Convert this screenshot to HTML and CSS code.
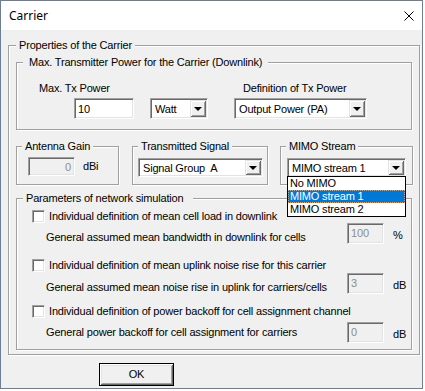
FILE: index.html
```html
<!DOCTYPE html>
<html>
<head>
<meta charset="utf-8">
<title>Carrier</title>
<link rel="stylesheet" href="styles.css">
</head>
<body>
<div class="window">
  <div class="titlebar">
    <span class="title">Carrier</span>
    <svg class="close" width="10" height="10" viewBox="0 0 10 10"><path d="M0.5 0.5 L9.5 9.5 M9.5 0.5 L0.5 9.5" stroke="#000" stroke-width="1" fill="none"/></svg>
  </div>
  <div class="client">
    <div class="group g-outer">
      <div class="gtitle t-outer">Properties of the Carrier</div>

      <div class="group g-power">
        <div class="gtitle t-power">Max. Transmitter Power for the Carrier (Downlink)</div>
        <div class="power-labels">
          <span class="lbl-maxtx">Max. Tx Power</span>
          <span class="lbl-def">Definition of Tx Power</span>
        </div>
        <div class="power-controls">
          <div class="edit e-power">10</div>
          <div class="combo c-watt"><span class="combo-text">Watt</span><span class="drop"><span class="tri"></span></span></div>
          <div class="combo c-def"><span class="combo-text">Output Power (PA)</span><span class="drop"><span class="tri"></span></span></div>
        </div>
      </div>

      <div class="row3">
        <div class="group g-ant">
          <div class="gtitle t-small">Antenna Gain</div>
          <div class="ant-row">
            <div class="edit disabled e-ant">0</div>
            <span class="unit-dbi">dBi</span>
          </div>
        </div>
        <div class="group g-sig">
          <div class="gtitle t-small">Transmitted Signal</div>
          <div class="combo c-sig"><span class="combo-text">Signal Group&nbsp; A</span><span class="drop"><span class="tri"></span></span></div>
        </div>
        <div class="group g-mimo">
          <div class="gtitle t-small">MIMO Stream</div>
          <div class="combo c-mimo"><span class="combo-text">MIMO stream 1</span><span class="drop"><span class="tri"></span></span>
            <ul class="droplist">
              <li>No MIMO</li>
              <li class="sel">MIMO stream 1</li>
              <li>MIMO stream 2</li>
            </ul>
          </div>
        </div>
      </div>

      <div class="group g-params">
        <div class="gtitle t-params">Parameters of network simulation</div>
        <div class="chk-row r-a"><span class="chk"></span><span>Individual definition of mean cell load in downlink</span></div>
        <div class="val-row r-b"><span class="val-label">General assumed mean bandwidth in downlink for cells</span><div class="edit disabled e-val">100</div><span class="val-unit">%</span></div>
        <div class="chk-row r-c"><span class="chk"></span><span>Individual definition of mean uplink noise rise for this carrier</span></div>
        <div class="val-row r-d"><span class="val-label">General assumed mean noise rise in uplink for carriers/cells</span><div class="edit disabled e-val">3</div><span class="val-unit">dB</span></div>
        <div class="chk-row r-e"><span class="chk"></span><span>Individual definition of power backoff for cell assignment channel</span></div>
        <div class="val-row r-f"><span class="val-label">General power backoff for cell assignment for carriers</span><div class="edit disabled e-val">0</div><span class="val-unit">dB</span></div>
      </div>
    </div>
    <div class="buttons">
      <div class="btn">OK</div>
    </div>
  </div>
</div>
</body>
</html>
```

FILE: styles.css
```css
* { box-sizing: border-box; }
html, body { margin: 0; padding: 0; }
body {
  background: #ffffff;
  font-family: "Liberation Sans", Arial, sans-serif;
  font-size: 11px;
  line-height: 13px;
  letter-spacing: -0.18px;
  color: #000;
}
.window {
  width: 423px;
  height: 389px;
  border: 1px solid #6e7d96;
  display: flex;
  flex-direction: column;
  background: #f0f0f0;
}
.titlebar {
  height: 29px;
  flex: none;
  background: #fff;
  display: flex;
  align-items: center;
  padding-left: 8px;
}
.title {
  font-family: "Noto Sans", "Open Sans", sans-serif;
  font-size: 12px;
  line-height: 16px;
  letter-spacing: 0;
}
.close { margin-left: auto; margin-right: 8px; display: block; }

.client {
  flex: 1;
  display: flex;
  flex-direction: column;
  padding: 15px 2px 0 7px;
}

.group {
  border: 1px solid #a0a0a0;
  box-shadow: inset 1px 1px 0 #fff, 1px 1px 0 #fff;
}
.gtitle {
  width: max-content;
  height: 13px;
  margin-top: -7px;
  padding: 0 3px;
  background: #f0f0f0;
}
.t-outer { margin-left: 7px; }
.t-power { margin-left: 6px; padding: 0 6px 0 6px; }
.t-small { margin-left: 5px; }
.t-params { margin-left: 6px; padding-right: 10px; }

.g-outer { width: 412px; height: 310px; }
.g-power { margin: 10px 7px 0 7px; padding-bottom: 10px; }
.power-labels { display: flex; margin-top: 13px; padding-left: 22px; }
.lbl-maxtx { width: 204px; }
.power-controls { display: flex; margin-top: 3px; padding-left: 57px; }

.edit {
  height: 21px;
  background: #fff;
  border: 1px solid;
  border-color: #a0a0a0 #fff #fff #a0a0a0;
  box-shadow: inset 1px 1px 0 #696969, inset -1px -1px 0 #e3e3e3;
  padding: 4px 3px 0 3px;
  white-space: nowrap;
}
.edit.disabled { background: #f0f0f0; color: #8d8d8d; }
.e-power { width: 60px; }

.combo {
  position: relative;
  display: flex;
  height: 21px;
  background: #fff;
  border: 1px solid;
  border-color: #a0a0a0 #fff #fff #a0a0a0;
  box-shadow: inset 1px 1px 0 #696969, inset -1px -1px 0 #e3e3e3;
  padding: 1px;
}
.combo-text { flex: 1; padding: 3px 0 0 3px; white-space: nowrap; }
.drop {
  width: 16px;
  flex: none;
  background: #f0f0f0;
  box-shadow: inset 1px 1px 0 #e3e3e3, inset -1px -1px 0 #696969, inset 2px 2px 0 #fff, inset -2px -2px 0 #a0a0a0;
  display: flex;
  align-items: center;
  justify-content: center;
}
.tri {
  width: 0; height: 0;
  border-left: 4px solid transparent;
  border-right: 4px solid transparent;
  border-top: 4px solid #000;
  margin-top: 1px;
}
.c-watt { width: 58px; margin-left: 16px; }
.c-def { width: 133px; margin-left: 26px; }

.row3 { display: flex; margin: 16px 0 0 7px; }
.row3 .group { height: 39px; }
.g-ant { width: 103px; }
.g-sig { width: 136px; margin-left: 13px; }
.g-mimo { width: 133px; margin-left: 12px; }
.ant-row { display: flex; margin-top: 4px; padding-left: 11px; }
.e-ant { width: 47px; height: 19px; text-align: right; padding-top: 3px; }
.unit-dbi { margin-left: 8px; padding-top: 3px; }
.c-sig { width: 125px; height: 19px; margin: 5px 0 0 5px; }
.c-mimo { width: 119px; height: 19px; margin: 5px 0 0 6px; }
.c-sig .combo-text, .c-mimo .combo-text { padding-top: 2px; }

.droplist {
  position: absolute;
  left: -1px;
  top: 100%;
  width: 119px;
  margin: 0;
  padding: 0;
  list-style: none;
  background: #fff;
  border: 1px solid #000;
  z-index: 5;
}
.droplist li { height: 13px; line-height: 13px; padding-left: 2px; white-space: nowrap; }
.droplist li.sel { background: #0078d7; color: #fff; outline: 1px dotted #ff9a30; outline-offset: -1px; }

.g-params { margin: 13px 7px 0 7px; height: 152px; }
.chk-row { display: flex; height: 13px; padding-left: 15px; }
.chk {
  width: 13px; height: 13px;
  flex: none;
  background: #fff;
  border: 1px solid;
  border-color: #a0a0a0 #fff #fff #a0a0a0;
  box-shadow: inset 1px 1px 0 #696969, inset -1px -1px 0 #e3e3e3;
  margin-right: 4px;
}
.val-row {
  display: grid;
  grid-template-columns: 1fr 37px 27px;
  height: 21px;
  padding-left: 29px;
  align-items: start;
}
.val-label { margin-top: 8px; white-space: nowrap; }
.val-unit { padding-left: 9px; margin-top: 6px; }
.e-val { height: 21px; padding-top: 3px; }
.r-a { margin-top: 5px; }
.r-b { margin-top: 0; }
.r-c { margin-top: 15px; }
.r-d { margin-top: 1px; }
.r-e { margin-top: 11px; }
.r-f { margin-top: 4px; }
.r-f .val-label { margin-top: 4px; }

.buttons { display: flex; margin-top: 8px; padding-left: 91px; }
.btn {
  width: 75px;
  height: 23px;
  border: 1px solid #000;
  background: #f0f0f0;
  box-shadow: inset 1px 1px 0 #fff, inset -1px -1px 0 #696969, inset 2px 2px 0 #e3e3e3, inset -2px -2px 0 #a0a0a0;
  text-align: center;
  line-height: 21px;
}
```
